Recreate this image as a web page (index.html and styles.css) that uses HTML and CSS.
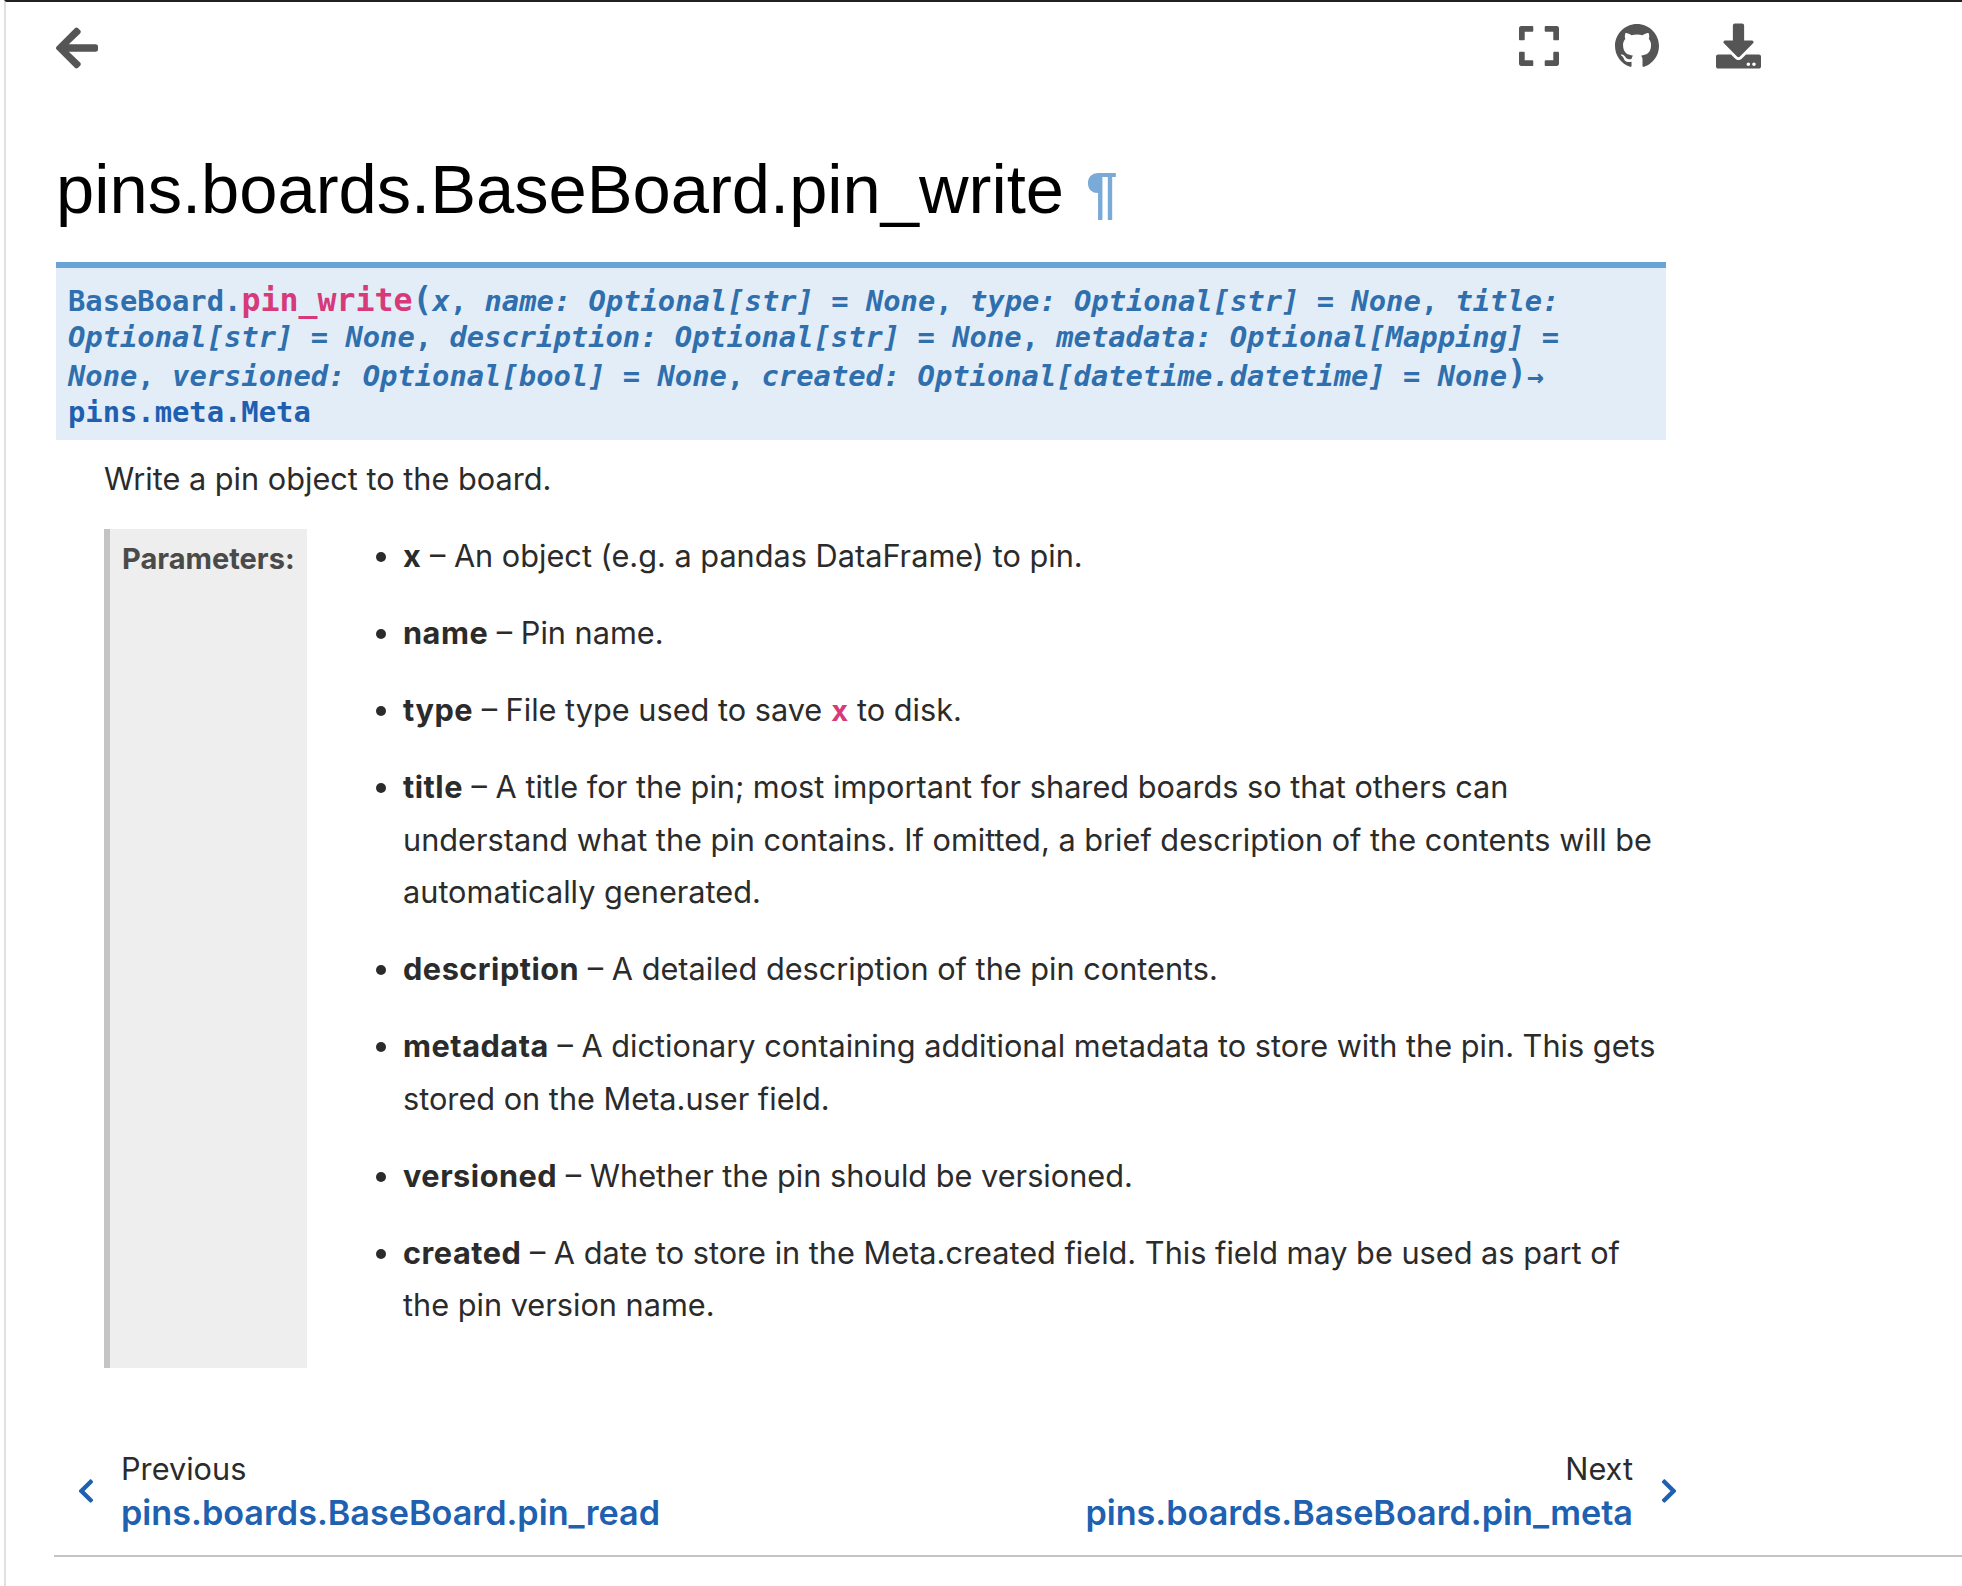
FILE: index.html
```html
<!DOCTYPE html>
<html lang="en">
<head>
<meta charset="utf-8">
<title>pins.boards.BaseBoard.pin_write</title>
<link rel="stylesheet" href="styles.css">
</head>
<body>
<div class="page">
  <header class="topbar">
    <a class="icon-link" href="#"><svg class="ic-back" viewBox="0 0 448 512"><path d="M257.5 445.1l-22.2 22.2c-9.4 9.4-24.6 9.4-33.9 0L7 273c-9.4-9.4-9.4-24.6 0-33.9L201.4 44.7c9.4-9.4 24.6-9.4 33.9 0l22.2 22.2c9.5 9.5 9.3 25-.4 34.3L136.6 216H424c13.3 0 24 10.7 24 24v32c0 13.3-10.7 24-24 24H136.6l120.5 114.8c9.8 9.3 10 24.8.4 34.3z"/></svg></a>
    <div class="actions">
      <a class="icon-link" href="#"><svg class="ic-expand" viewBox="0 32 448 448"><path d="M0 180V56c0-13.3 10.7-24 24-24h124c6.6 0 12 5.4 12 12v40c0 6.6-5.4 12-12 12H64v84c0 6.6-5.4 12-12 12H12c-6.6 0-12-5.4-12-12zm288-136v40c0 6.6 5.4 12 12 12h84v84c0 6.6 5.4 12 12 12h40c6.6 0 12-5.4 12-12V56c0-13.3-10.7-24-24-24H300c-6.6 0-12 5.4-12 12zm148 276h-40c-6.6 0-12 5.4-12 12v84h-84c-6.6 0-12 5.4-12 12v40c0 6.6 5.4 12 12 12h124c13.3 0 24-10.7 24-24V332c0-6.6-5.4-12-12-12zM160 468v-40c0-6.6-5.4-12-12-12H64v-84c0-6.6-5.4-12-12-12H12c-6.6 0-12 5.4-12 12v124c0 13.3 10.7 24 24 24h124c6.6 0 12-5.4 12-12z"/></svg></a>
      <a class="icon-link" href="#"><svg class="ic-github" viewBox="0 0 16 16"><path d="M8 0C3.58 0 0 3.58 0 8c0 3.54 2.29 6.53 5.47 7.59.4.07.55-.17.55-.38 0-.19-.01-.82-.01-1.49-2.01.37-2.53-.49-2.69-.94-.09-.23-.48-.94-.82-1.13-.28-.15-.68-.52-.01-.53.63-.01 1.08.58 1.23.82.72 1.21 1.87.87 2.33.66.07-.52.28-.87.51-1.07-1.78-.2-3.64-.89-3.64-3.95 0-.87.31-1.59.82-2.15-.08-.2-.36-1.02.08-2.12 0 0 .67-.21 2.2.82.64-.18 1.32-.27 2-.27.68 0 1.36.09 2 .27 1.53-1.04 2.2-.82 2.2-.82.44 1.1.16 1.92.08 2.12.51.56.82 1.27.82 2.15 0 3.07-1.87 3.75-3.65 3.95.29.25.54.73.54 1.48 0 1.07-.01 1.93-.01 2.2 0 .21.15.46.55.38A8.013 8.013 0 0016 8c0-4.42-3.58-8-8-8z"/></svg></a>
      <a class="icon-link" href="#"><svg class="ic-download" viewBox="0 0 512 512"><path d="M216 0h80c13.3 0 24 10.7 24 24v168h87.7c17.8 0 26.7 21.5 14.1 34.1L269.7 378.3c-7.5 7.5-19.8 7.5-27.3 0L90.1 226.1c-12.6-12.6-3.7-34.1 14.1-34.1H192V24c0-13.3 10.7-24 24-24zm296 376v112c0 13.3-10.7 24-24 24H24c-13.3 0-24-10.7-24-24V376c0-13.3 10.7-24 24-24h146.7l49 49c20.1 20.1 52.5 20.1 72.6 0l49-49H488c13.3 0 24 10.7 24 24zm-124 88c0-11-9-20-20-20s-20 9-20 20 9 20 20 20 20-9 20-20zm64 0c0-11-9-20-20-20s-20 9-20 20 9 20 20 20 20-9 20-20z"/></svg></a>
    </div>
  </header>

  <main class="content">
    <h1 class="title">pins.boards.BaseBoard.pin_write <a class="headerlink" href="#">¶</a></h1>
    <dl class="method">
      <dt class="signature"><span class="sig-class">BaseBoard.</span><span class="sig-name">pin_write</span><span class="sig-paren">(</span><em>x</em>, <em>name: Optional[str] = None</em>, <em>type: Optional[str] = None</em>, <em>title: Optional[str] = None</em>, <em>description: Optional[str] = None</em>, <em>metadata: Optional[Mapping] = None</em>, <em>versioned: Optional[bool] = None</em>, <em>created: Optional[datetime.datetime] = None</em><span class="sig-paren sig-close">)</span><span class="sig-arrow">→</span> <span class="sig-return">pins.meta.Meta</span></dt>
      <dd class="method-body">
        <p class="summary">Write a pin object to the board.</p>
        <div class="fields">
          <div class="field-name">Parameters:</div>
          <ul class="field-list">
            <li><strong>x</strong> – An object (e.g. a pandas DataFrame) to pin.</li>
            <li><strong>name</strong> – Pin name.</li>
            <li><strong>type</strong> – File type used to save <code class="ref">x</code> to disk.</li>
            <li><strong>title</strong> – A title for the pin; most important for shared boards so that others can understand what the pin contains. If omitted, a brief description of the contents will be automatically generated.</li>
            <li><strong>description</strong> – A detailed description of the pin contents.</li>
            <li><strong>metadata</strong> – A dictionary containing additional metadata to store with the pin. This gets stored on the Meta.user field.</li>
            <li><strong>versioned</strong> – Whether the pin should be versioned.</li>
            <li><strong>created</strong> – A date to store in the Meta.created field. This field may be used as part of the pin version name.</li>
          </ul>
        </div>
      </dd>
    </dl>
    <nav class="pager">
      <a class="pager-link" href="#">
        <svg class="chevron" viewBox="20 32 280 448"><path d="M34.52 239.03L228.87 44.69c9.37-9.37 24.57-9.37 33.94 0l22.67 22.67c9.36 9.36 9.37 24.52.04 33.9L131.49 256l154.02 154.75c9.34 9.38 9.32 24.54-.04 33.9l-22.67 22.67c-9.37 9.37-24.57 9.37-33.94 0L34.52 272.97c-9.37-9.37-9.37-24.57 0-33.94z"/></svg>
        <span class="pager-text">
          <span class="pager-label">Previous</span>
          <span class="pager-title">pins.boards.BaseBoard.pin_read</span>
        </span>
      </a>
      <a class="pager-link pager-next" href="#">
        <span class="pager-text">
          <span class="pager-label">Next</span>
          <span class="pager-title">pins.boards.BaseBoard.pin_meta</span>
        </span>
        <svg class="chevron" viewBox="20 32 280 448"><path d="M285.476 272.971L91.132 467.314c-9.373 9.373-24.569 9.373-33.941 0l-22.667-22.667c-9.357-9.357-9.375-24.522-.04-33.901L188.505 256 34.484 101.255c-9.335-9.379-9.317-24.544.04-33.901l22.667-22.667c9.373-9.373 24.569-9.373 33.941 0L285.475 239.03c9.373 9.372 9.373 24.568.001 33.941z"/></svg>
      </a>
    </nav>
  </main>
  <div class="footer-rule"></div>
</div>
</body>
</html>
```
FILE: styles.css
```css
* { box-sizing: border-box; }
html, body { margin: 0; padding: 0; background: #fff; }
body {
  font-family: Inter, "Liberation Sans", sans-serif;
  font-size: 30.7px;
  color: #2b2b2b;
  height: 1586px;
  overflow: hidden;
}
a { text-decoration: none; color: inherit; }
.page {
  border-top: 2px solid #222;
  margin-left: 4px;
  border-left: 2px solid #e0e0e0;
  padding-left: 50px;
  height: 1586px;
}
.topbar {
  display: flex;
  justify-content: space-between;
  align-items: center;
  height: 92px;
  padding-right: 201px;
}
.topbar svg { display: block; fill: #555; }
.ic-back { width: 42px; height: 48px; }
.actions { display: flex; align-items: center; padding-bottom: 4px; }
.ic-expand { width: 40px; height: 40px; margin-right: 56px; }
.ic-github { width: 44px; height: 44px; margin-right: 57px; }
.ic-download { width: 45px; height: 46px; }
.content { width: 1610px; }
.title {
  margin: 56px 0 0;
  font-family: "Liberation Sans", Arial, sans-serif;
  font-weight: 400;
  font-size: 68.7px;
  line-height: 80px;
  color: #000;
  height: 112px;
}
.headerlink { color: #7aaad8; margin-left: 3px; font-size: 57px; font-weight: 700; }
.method { margin: 0; }
.signature {
  border-top: 6px solid #6aa3d5;
  background: #e3edf8;
  padding: 15px 12px 0;
  font-family: "DejaVu Sans Mono", monospace;
  font-weight: 700;
  font-size: 28.8px;
  line-height: 36px;
  color: #2f6fad;
  height: 178px;
}
.signature em { font-style: italic; }
.sig-name { font-size: 31.6px; line-height: 30px; color: #d63a7a; }
.sig-paren { font-size: 33px; line-height: 30px; }
.sig-close { vertical-align: 2px; line-height: 36px; }
.sig-arrow { font-size: 28px; line-height: 20px; }
.sig-return { color: #1f5fb0; }
.method-body { margin: 0 0 0 48px; }
.summary { margin: 0; padding-top: 18px; line-height: 42px; }
.fields { display: flex; margin-top: 29px; }
.field-name {
  flex: 0 0 203px;
  height: 839px;
  background: #eee;
  border-left: 6px solid #c4c4c4;
  padding: 12px 0 0 12px;
  font-weight: 700;
  font-size: 29px;
  line-height: 36px;
  color: #4a4a4a;
}
.field-list {
  margin: 0;
  padding: 1px 0 0 96px;
  list-style: disc;
  line-height: 52.5px;
}
.field-list li { margin-bottom: 24.5px; }
.field-list strong { font-weight: 700; letter-spacing: 0.5px; }
.ref {
  font-family: "DejaVu Sans Mono", monospace;
  font-weight: 700;
  font-size: 29px;
  line-height: 1;
  color: #d63a7a;
}
.pager {
  display: flex;
  justify-content: space-between;
  align-items: center;
  margin: 79px -11px 0 0;
  padding: 0 0 0 22px;
}
.pager-link { display: flex; align-items: center; gap: 27px; }
.pager-next { gap: 28px; }
.pager-text { display: flex; flex-direction: column; }
.pager-next { text-align: right; }
.pager-label { line-height: 44px; font-size: 30.7px; }
.pager-title { line-height: 44px; font-size: 34.2px; font-weight: 600; color: #2060b0; }
.chevron { width: 16px; height: 24px; fill: #2060b0; display: block; }
.footer-rule { margin-top: 20px; margin-left: -2px; height: 2px; background: #c4c4c4; }
```
